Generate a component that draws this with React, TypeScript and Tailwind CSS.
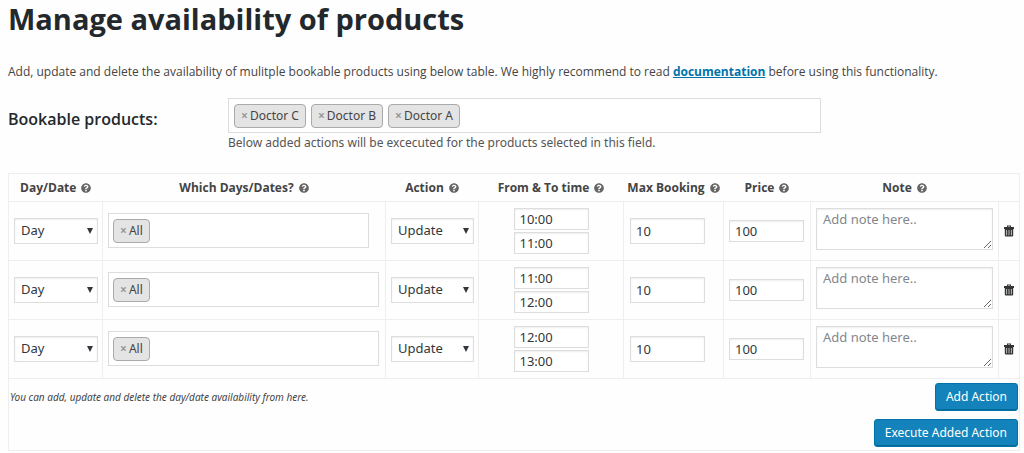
import { useState } from 'react';
import { FaQuestionCircle } from 'react-icons/fa';

type ActionRow = {
  id: number;
  days: string[];
  from: string;
  to: string;
};

const columns = ['Day/Date', 'Which Days/Dates?', 'Action', 'From & To time', 'Max Booking', 'Price', 'Note'];

const initialRows: ActionRow[] = [
  { id: 1, days: ['All'], from: '10:00', to: '11:00' },
  { id: 2, days: ['All'], from: '11:00', to: '12:00' },
  { id: 3, days: ['All'], from: '12:00', to: '13:00' },
];

const fieldClass = 'block border border-[#ddd] bg-white text-[13px] text-[#32373c] shadow-[inset_0_1px_2px_rgba(0,0,0,0.07)]';

const buttonClass = 'h-7 px-[10px] rounded-[3px] border border-[#0073aa] bg-[#1583bb] text-xs text-white shadow-[inset_0_-1px_0_#006799]';

function TrashIcon() {
  return (
    <svg viewBox="0 0 10 12" className="w-[10px] h-[12px]" aria-hidden="true">
      <path d="M3 2V.5h4V2h3v2H0V2zM4 2h2v-.6H4z" fill="#333" fillRule="evenodd" />
      <path d="M.8 4h8.400v6.600q0 1-1 1H1.800q-1 0-1-1z" fill="#333" />
      <path d="M2.600 5v5.300M5 5v5.300M7.400 5v5.300" stroke="#b5bfc0" />
    </svg>
  );
}

function Tag({ label, onRemove }: { label: string; onRemove: () => void }) {
  return (
    <li className="flex items-center h-6 px-[6px] gap-[2px] rounded border border-[#aaa] bg-[#e4e4e4] text-xs text-[#444]">
      <button type="button" aria-label={`Remove ${label}`} onClick={onRemove} className="text-[12px] font-bold text-[#999]">
        ×
      </button>
      {label}
    </li>
  );
}

function SelectField({ label, options }: { label: string; options: string[] }) {
  return (
    <div className="relative">
      <select aria-label={label} className={`${fieldClass} appearance-none w-full h-[26px] pl-[6px]`}>
        {options.map(o => <option key={o}>{o}</option>)}
      </select>
      <svg viewBox="0 0 6 6" className="absolute right-[5px] top-[10px] w-[6px] h-[6px] pointer-events-none" aria-hidden="true">
        <path d="M0 0h6L3 6z" fill="#32373c" />
      </svg>
    </div>
  );
}

export default function App() {
  const [products, setProducts] = useState(['Doctor C', 'Doctor B', 'Doctor A']);
  const [rows, setRows] = useState(initialRows);

  const addRow = () => {
    setRows([...rows, { id: Date.now(), days: ['All'], from: '', to: '' }]);
  };

  const clearDay = (id: number, day: string) => {
    setRows(rows.map(r => (r.id === id ? { ...r, days: r.days.filter(d => d !== day) } : r)));
  };

  return (
    <main className="pl-2 pr-1 bg-[#fefefe] text-[#444] font-['Noto_Sans',sans-serif]">
      <h1 className="h-[60px] text-[29px] leading-[37px] font-bold text-[#23282d] font-['Open_Sans',sans-serif]">Manage availability of products</h1>

      <p className="text-xs leading-6 font-['Open_Sans',sans-serif]">
        Add, update and delete the availability of mulitple bookable products using below table. We highly recommend to read{' '}
        <a href="#documentation" className="font-bold text-[#0073aa] underline">documentation</a> before using this functionality.
      </p>

      <div className="flex mt-[14px]">
        <div id="products-label" className="w-[220px] pt-[9px] text-base leading-6 font-semibold text-[#23282d] font-['Open_Sans',sans-serif]">
          Bookable products:
        </div>
        <div className="w-[593px]">
          <ul aria-labelledby="products-label" className="flex gap-[5px] h-[35px] p-[5px] border border-[#ddd] bg-white">
            {products.map(p => (
              <Tag key={p} label={p} onRemove={() => setProducts(products.filter(x => x !== p))} />
            ))}
          </ul>
          <p className="text-xs leading-5 text-[#555]">Below added actions will be excecuted for the products selected in this field.</p>
        </div>
      </div>

      <table className="w-full mt-5 table-fixed border-collapse border border-[#eee]">
        <colgroup>
          <col className="w-[94px]" />
          <col />
          <col className="w-[93px]" />
          <col className="w-[145px]" />
          <col className="w-[100px]" />
          <col className="w-[87px]" />
          <col className="w-[188px]" />
          <col className="w-[21px]" />
        </colgroup>
        <thead>
          <tr className="h-[28px] border-b border-[#eee] text-xs font-bold font-['Open_Sans',sans-serif]">
            {columns.map(c => (
              <th key={c} scope="col" className="p-0">
                <span className="flex items-center justify-center gap-[5px] whitespace-nowrap">
                  {c}
                  <FaQuestionCircle className="size-[10px] text-[#666]" />
                </span>
              </th>
            ))}
            <td />
          </tr>
        </thead>
        <tbody>
          {rows.map((row, i) => (
            <tr key={row.id} className="h-[59px] border-b border-[#eee]">
              <td className="border border-[#eee] pl-[5px] pr-1 py-0">
                <SelectField label="Day or date" options={['Day', 'Date']} />
              </td>
              <td className={`border border-[#eee] pl-[5px] pt-0 pb-px ${i === 0 ? 'pr-4' : 'pr-[6px]'}`}>
                <ul className="flex gap-[5px] h-[35px] px-1 py-[5px] border border-[#ddd] bg-white">
                  {row.days.map(d => <Tag key={d} label={d} onRemove={() => clearDay(row.id, d)} />)}
                </ul>
              </td>
              <td className="border border-[#eee] pl-[5px] pr-1 py-0">
                <SelectField label="Action" options={['Update', 'Add', 'Delete']} />
              </td>
              <td className="border border-[#eee] p-0">
                <div className="flex flex-col items-center gap-[2px]">
                  <input aria-label="From time" defaultValue={row.from} className={`${fieldClass} w-[75px] h-[22px] px-[5px]`} />
                  <input aria-label="To time" defaultValue={row.to} className={`${fieldClass} w-[75px] h-[22px] px-[5px]`} />
                </div>
              </td>
              <td className="border border-[#eee] px-[6px] pt-0 pb-px">
                <input aria-label="Max booking" defaultValue="10" className={`${fieldClass} w-[75px] h-[26px] px-[5px]`} />
              </td>
              <td className="border border-[#eee] px-[5px] pt-0 pb-px">
                <input aria-label="Price" defaultValue="100" className={`${fieldClass} w-[75px] h-[22px] px-[5px]`} />
              </td>
              <td className="border border-[#eee] px-[5px] pt-0 pb-1">
                <textarea aria-label="Note" placeholder="Add note here.." className={`${fieldClass} w-full h-[42px] px-[6px] py-0 leading-5 placeholder:text-[#82878c]`} />
              </td>
              <td className="border border-[#eee] p-0">
                <button type="button" aria-label="Delete row" className="block mx-auto" onClick={() => setRows(rows.filter(r => r.id !== row.id))}>
                  <TrashIcon />
                </button>
              </td>
            </tr>
          ))}
        </tbody>
        <tfoot>
          <tr className="h-[72px]">
            <td colSpan={4} className="align-top px-px py-2 text-[10px] leading-5 italic">
              You can add, update and delete the day/date availability from here.
            </td>
            <td colSpan={4} className="align-top px-px pt-1 pb-0">
              <div className="flex flex-col items-end gap-2">
                <button type="button" onClick={addRow} className={buttonClass}>
                  Add Action
                </button>
                <button type="button" className={buttonClass}>
                  Execute Added Action
                </button>
              </div>
            </td>
          </tr>
        </tfoot>
      </table>
    </main>
  );
}
